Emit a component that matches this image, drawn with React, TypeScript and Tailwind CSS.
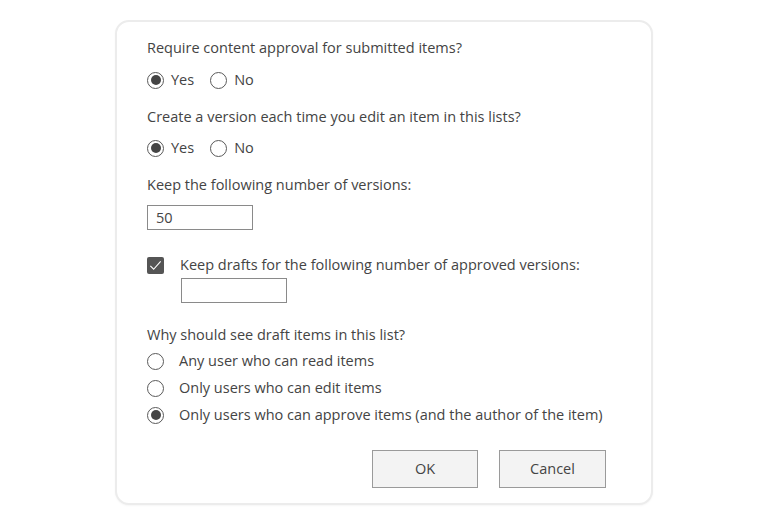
import { useState } from "react";

const textFont = "font-['Open_Sans',_'Noto_Sans',_sans-serif]";

type RadioProps = {
  checked: boolean;
  label: string;
  onSelect: () => void;
};

const Dot = ({ checked }: { checked: boolean }) => (
  <span className="flex h-[17px] w-[17px] shrink-0 items-center justify-center rounded-full border border-[#5a5a5a] bg-white">
    {checked && <span className="h-[10px] w-[10px] rounded-full bg-[#444]" />}
  </span>
);

const Radio = ({ checked, label, onSelect }: RadioProps) => (
  <button type="button" onClick={onSelect} className="flex h-5 items-center gap-[7px] text-left">
    <Dot checked={checked} />
    <span>{label}</span>
  </button>
);

const WideRadio = ({ checked, label, onSelect }: RadioProps) => (
  <button type="button" onClick={onSelect} className="flex h-5 items-center gap-[15px] text-left">
    <Dot checked={checked} />
    <span>{label}</span>
  </button>
);

const viewers = [
  "Any user who can read items",
  "Only users who can edit items",
  "Only users who can approve items (and the author of the item)",
];

export default function App() {
  const [approval, setApproval] = useState(true);
  const [versioning, setVersioning] = useState(true);
  const [versions, setVersions] = useState("50");
  const [keepDrafts, setKeepDrafts] = useState(true);
  const [drafts, setDrafts] = useState("");
  const [viewer, setViewer] = useState(2);

  return (
    <div className={`min-h-screen bg-white pt-[20px] ${textFont} text-[14.5px] leading-5 text-[#444]`}>
      <div className="ml-[115px] flex h-[485px] w-[538px] flex-col rounded-[14px] border-2 border-[#ececec] bg-white px-[30px] pt-[16px] shadow-[0_1px_2px_rgba(0,0,0,0.04)]">
        <p>Require content approval for submitted items?</p>
        <div className="mt-[12px] flex gap-[16px]">
          <Radio checked={approval} label="Yes" onSelect={() => setApproval(true)} />
          <Radio checked={!approval} label="No" onSelect={() => setApproval(false)} />
        </div>

        <p className="mt-[17px]">Create a version each time you edit an item in this lists?</p>
        <div className="mt-[11px] flex gap-[16px]">
          <Radio checked={versioning} label="Yes" onSelect={() => setVersioning(true)} />
          <Radio checked={!versioning} label="No" onSelect={() => setVersioning(false)} />
        </div>

        <p className="mt-[17px]">Keep the following number of versions:</p>
        <input
          value={versions}
          onChange={(e) => setVersions(e.target.value)}
          className="mt-[10px] h-[25px] w-[106px] border border-[#8a8a8a] px-[8px] outline-none"
        />

        <button
          type="button"
          onClick={() => setKeepDrafts(!keepDrafts)}
          className="mt-[25px] flex h-5 items-center gap-[16px] text-left"
        >
          <span
            className={`flex h-[17px] w-[17px] shrink-0 items-center justify-center rounded-[2px] ${
              keepDrafts ? "bg-[#555]" : "border border-[#555] bg-white"
            }`}
          >
            {keepDrafts && (
              <svg viewBox="0 0 16 16" className="h-[15px] w-[15px]" fill="none" stroke="white" strokeWidth="1.2">
                <path d="M2.5 8.5 L6 12 L13.5 3.5" />
              </svg>
            )}
          </span>
          <span>Keep drafts for the following number of approved versions:</span>
        </button>
        <input
          value={drafts}
          onChange={(e) => setDrafts(e.target.value)}
          className="ml-[34px] mt-[3px] h-[25px] w-[106px] border border-[#8a8a8a] px-[8px] outline-none"
        />

        <p className="mt-[22px]">Why should see draft items in this list?</p>
        <div className="mt-[6px] flex flex-col gap-[7px]">
          {viewers.map((label, i) => (
            <WideRadio key={label} checked={viewer === i} label={label} onSelect={() => setViewer(i)} />
          ))}
        </div>

        <div className="mt-[25px] flex justify-end gap-[21px] pr-[15px]">
          <button type="button" className="h-[38px] w-[106px] border border-[#9a9a9a] bg-[#f3f3f3]">
            OK
          </button>
          <button type="button" className="h-[38px] w-[107px] border border-[#9a9a9a] bg-[#f3f3f3]">
            Cancel
          </button>
        </div>
      </div>
    </div>
  );
}
